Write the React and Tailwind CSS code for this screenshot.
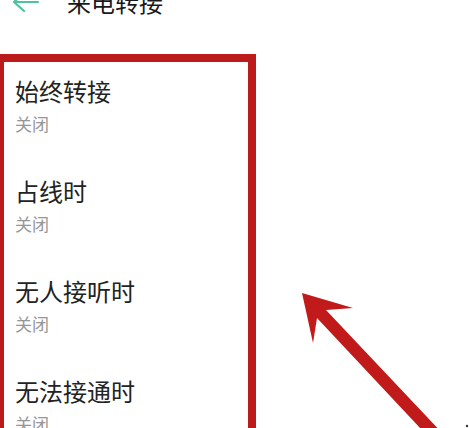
const items = ["始终转接", "占线时", "无人接听时", "无法接通时"];

export default function App() {
  return (
    <div
      className="relative w-[469px] h-[428px] overflow-hidden bg-white"
      style={{ fontFamily: '"Noto Sans CJK SC", "Noto Sans", sans-serif' }}
    >
      {/* Header */}
      <div className="-mt-[16px] h-9 flex items-center">
        <svg className="ml-[10px] w-[30px] h-[24px]" viewBox="0 0 30 24" fill="none">
          <path d="M4 12 H28 M4 12 L14 3 M4 12 L14 21" stroke="#4cc4a0" strokeWidth="2.2" strokeLinecap="round" strokeLinejoin="round" />
        </svg>
        <span className="ml-[27px] text-[24px] leading-9 text-[#1a1a1a]">来电转接</span>
      </div>

      {/* Highlighted list */}
      <div className="mt-[34px] -ml-1 w-[260px] h-[420px] border-8 border-[#bc1b1b] pt-[14px] pl-[11px]">
        {items.map((title) => (
          <div key={title} className="h-[100px] flex flex-col">
            <div className="text-[24px] leading-[30px] text-[#222]">{title}</div>
            <div className="mt-[8px] text-[17px] leading-5 text-[#969696]">关闭</div>
          </div>
        ))}
      </div>

      {/* Annotation arrow */}
      <svg className="absolute left-0 top-0 w-[469px] h-[428px] pointer-events-none" viewBox="0 0 469 428">
        <polygon
          points="302,293 353,308 326,310 445,436 436,445 317,318 313,343"
          fill="#c01a1a"
        />
        <circle cx="467" cy="426" r="1.2" fill="#333" />
      </svg>
    </div>
  );
}
